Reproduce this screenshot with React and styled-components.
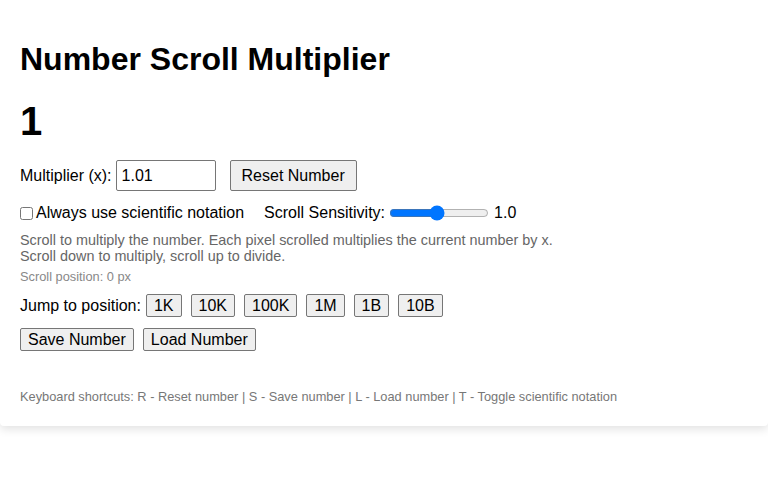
import React, { useState } from 'react';
import styled, { createGlobalStyle } from 'styled-components';

const GlobalStyle = createGlobalStyle`
  body {
    margin: 0;
    background: #ffffff;
    font-family: "Liberation Sans", Arial, sans-serif;
    color: #000;
  }
`;

const Page = styled.div`
  min-height: 480px;
  background: #fff;
`;

const Card = styled.div`
  position: relative;
  background: #fff;
  padding: 20px 20px 22px;
  border-radius: 0 0 4px 4px;
  box-shadow: 0 3px 10px rgba(0, 0, 0, 0.12);
`;

const Title = styled.h1`
  font-size: 32px;
  font-weight: bold;
  margin: 21px 0 21px;
`;

const Display = styled.div`
  font-size: 40px;
  font-weight: bold;
  margin: 0 0 16px;
`;

const Row = styled.div`
  display: flex;
  align-items: center;
  margin: ${p => p.$margin || '0'};
  font-size: 16px;
`;

const Label = styled.label`
  display: flex;
  align-items: center;
  margin-right: ${p => p.$gap || '0'};
`;

const TextInput = styled.input`
  width: 100px;
  box-sizing: border-box;
  height: 31px;
  padding: 4px 5px;
  font-size: 16px;
  font-family: inherit;
  border: 1px solid #767676;
  border-radius: 2px;
  margin-left: 4px;
`;

const Button = styled.button`
  font-family: inherit;
  font-size: 16px;
  padding: ${p => (p.$big ? '5px 11px' : '1px 7px')};
  height: ${p => (p.$big ? '31px' : '23px')};
  background: #efefef;
  border: 1px solid #767676;
  border-radius: 2px;
  color: #000;
  margin-left: ${p => p.$ml || '0'};
  cursor: pointer;
`;

const Checkbox = styled.input`
  width: 13px;
  height: 13px;
  margin: 0 3px 0 0;
`;

const Range = styled.input`
  width: 100px;
  margin: 0 5px 0 4px;
  accent-color: #0075ff;
`;

const Description = styled.p`
  font-size: 14.4px;
  line-height: 16px;
  color: #666;
  margin: 0;
`;

const Position = styled.p`
  font-size: 12.8px;
  color: #888;
  margin: 5px 0 0;
`;

const Shortcuts = styled.p`
  font-size: 12.8px;
  color: #777;
  margin: 38px 0 0;
`;

const jumps = ['1K', '10K', '100K', '1M', '1B', '10B'];

export default function App() {
  const [multiplier, setMultiplier] = useState('1.01');
  const [sensitivity, setSensitivity] = useState(1);

  return (
    <Page>
      <GlobalStyle />
      <Card>
        <Title>Number Scroll Multiplier</Title>
        <Display>1</Display>
        <Row>
          <Label>
            Multiplier (x):
            <TextInput value={multiplier} onChange={e => setMultiplier(e.target.value)} />
          </Label>
          <Button $big $ml="14px">Reset Number</Button>
        </Row>
        <Row $margin="13px 0 10px">
          <Label $gap="20px">
            <Checkbox type="checkbox" />
            Always use scientific notation
          </Label>
          <Label>
            Scroll Sensitivity:
            <Range
              type="range"
              min="0.1"
              max="2"
              step="0.1"
              value={sensitivity}
              onChange={e => setSensitivity(parseFloat(e.target.value))}
            />
            {sensitivity.toFixed(1)}
          </Label>
        </Row>
        <Description>
          Scroll to multiply the number. Each pixel scrolled multiplies the current number by x.
          <br />
          Scroll down to multiply, scroll up to divide.
        </Description>
        <Position>Scroll position: 0 px</Position>
        <Row $margin="10px 0 11px">
          Jump to position:
          {jumps.map((j, i) => (
            <Button key={j} $ml={i === 0 ? '5px' : '9px'}>{j}</Button>
          ))}
        </Row>
        <Row>
          <Button>Save Number</Button>
          <Button $ml="9px">Load Number</Button>
        </Row>
        <Shortcuts>
          Keyboard shortcuts: R - Reset number | S - Save number | L - Load number | T - Toggle scientific notation
        </Shortcuts>
      </Card>
    </Page>
  );
}
